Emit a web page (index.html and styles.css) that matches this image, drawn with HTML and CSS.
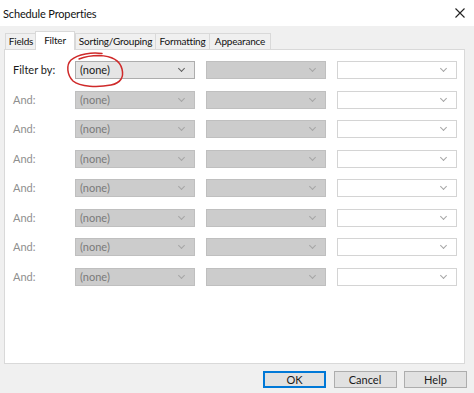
FILE: index.html
```html
<!DOCTYPE html>
<html>
<head>
<meta charset="utf-8">
<link rel="stylesheet" href="styles.css">
</head>
<body>
<div class="dialog">
  <div class="titlebar">
    <span class="title">Schedule Properties</span>
    <svg class="close" width="10" height="10" viewBox="0 0 10 10"><path d="M0.5 0.5 L9.5 9.5 M9.5 0.5 L0.5 9.5" stroke="#222" stroke-width="1.1" fill="none"/></svg>
  </div>
  <div class="tabs">
    <div class="tab tab-fields">Fields</div>
    <div class="tab active tab-filter">Filter</div>
    <div class="tab tab-sorting">Sorting/Grouping</div>
    <div class="tab tab-formatting">Formatting</div>
    <div class="tab tab-appearance">Appearance</div>
  </div>
  <div class="panel">
    <div class="grid">
      <div class="label">Filter by:</div>
      <div class="dd enabled"><span>(none)</span><i class="chev"></i></div>
      <div class="dd disabled"><span></span><i class="chev"></i></div>
      <div class="dd empty"><span></span><i class="chev"></i></div>

      <div class="label dim">And:</div>
      <div class="dd disabled"><span>(none)</span><i class="chev"></i></div>
      <div class="dd disabled"><span></span><i class="chev"></i></div>
      <div class="dd empty"><span></span><i class="chev"></i></div>

      <div class="label dim">And:</div>
      <div class="dd disabled"><span>(none)</span><i class="chev"></i></div>
      <div class="dd disabled"><span></span><i class="chev"></i></div>
      <div class="dd empty"><span></span><i class="chev"></i></div>

      <div class="label dim">And:</div>
      <div class="dd disabled"><span>(none)</span><i class="chev"></i></div>
      <div class="dd disabled"><span></span><i class="chev"></i></div>
      <div class="dd empty"><span></span><i class="chev"></i></div>

      <div class="label dim">And:</div>
      <div class="dd disabled"><span>(none)</span><i class="chev"></i></div>
      <div class="dd disabled"><span></span><i class="chev"></i></div>
      <div class="dd empty"><span></span><i class="chev"></i></div>

      <div class="label dim">And:</div>
      <div class="dd disabled"><span>(none)</span><i class="chev"></i></div>
      <div class="dd disabled"><span></span><i class="chev"></i></div>
      <div class="dd empty"><span></span><i class="chev"></i></div>

      <div class="label dim">And:</div>
      <div class="dd disabled"><span>(none)</span><i class="chev"></i></div>
      <div class="dd disabled"><span></span><i class="chev"></i></div>
      <div class="dd empty"><span></span><i class="chev"></i></div>

      <div class="label dim">And:</div>
      <div class="dd disabled"><span>(none)</span><i class="chev"></i></div>
      <div class="dd disabled"><span></span><i class="chev"></i></div>
      <div class="dd empty"><span></span><i class="chev"></i></div>
    </div>
  </div>
  <div class="footer">
    <button class="btn default">OK</button>
    <button class="btn">Cancel</button>
    <button class="btn">Help</button>
  </div>
  <svg class="markup" width="60" height="38" viewBox="0 0 60 38">
    <path d="M36 2.5 C26 1, 12 3, 5 9 C0 14, 1 24, 7 30 C14 36, 32 36.5, 45 34 C55 32, 58 26, 56 18 C54 10, 46 5, 33 4.5 C25 4.5, 18 6, 13 8" stroke="#cf2a2a" stroke-width="1.5" fill="none" stroke-linecap="round"/>
  </svg>
</div>
</body>
</html>
```

FILE: styles.css
```css
html, body {
  margin: 0;
  padding: 0;
}
body {
  background: #f0f0f0;
  font-family: Lato, "Noto Sans", "Liberation Sans", sans-serif;
  font-size: 11px;
  color: #1a1a1a;
}
.dialog {
  position: relative;
  width: 474px;
  height: 393px;
  display: flex;
  flex-direction: column;
  overflow: hidden;
}
.titlebar {
  height: 26px;
  background: #ffffff;
  display: flex;
  align-items: center;
  justify-content: space-between;
  padding: 0 9px 0 3px;
  box-sizing: border-box;
  flex: none;
}
.title {
  font-size: 11px;
  letter-spacing: -0.15px;
  color: #111;
}
.close {
  display: block;
}
.tabs {
  height: 23px;
  display: flex;
  align-items: flex-end;
  padding-left: 5px;
  flex: none;
  position: relative;
  z-index: 2;
}
.tab {
  height: 16px;
  line-height: 15px;
  padding: 0;
  text-align: center;
  font-size: 10px;
  letter-spacing: -0.2px;
  white-space: nowrap;
  border: 1px solid #d9d9d9;
  border-bottom: none;
  margin-right: -1px;
  background: #f0f0f0;
  color: #111;
  box-sizing: border-box;
}
.tab.active {
  height: 19px;
  margin-bottom: -1px;
  background: #ffffff;
  line-height: 16px;
  margin-left: -1px;
  margin-right: 0;
  position: relative;
}
.tab-fields { width: 32px; }
.tab-filter { width: 40px; }
.tab-sorting { width: 81px; }
.tab-formatting { width: 55px; }
.tab-appearance { width: 62px; }
.panel {
  height: 315px;
  margin: 0 9px 0 4px;
  background: #ffffff;
  border: 1px solid #d9d9d9;
  box-sizing: border-box;
  padding: 11px 0 0 8px;
  flex: none;
}
.grid {
  display: grid;
  grid-template-columns: 51px 120px 120px 120px;
  grid-auto-rows: 18px;
  column-gap: 11px;
  row-gap: 11.5px;
}
.label {
  line-height: 18px;
  color: #1a1a1a;
}
.label.dim {
  color: #8f8f8f;
}
.dd {
  box-sizing: border-box;
  border: 1px solid #bfbfbf;
  display: flex;
  align-items: center;
  justify-content: space-between;
  padding: 0 10px 0 4px;
  line-height: 16px;
}
.dd.enabled {
  background: #e5e5e5;
  border-color: #adadad;
  color: #1a1a1a;
}
.dd.disabled {
  background: #cccccc;
  border-color: #bfbfbf;
  color: #7a7a7a;
}
.dd.empty {
  background: #ffffff;
  border-color: #d4d4d4;
}
.chev {
  display: block;
  width: 4px;
  height: 4px;
  border-right: 1px solid #606060;
  border-bottom: 1px solid #606060;
  transform: rotate(45deg);
  margin-top: -3px;
}
.dd.disabled .chev,
.dd.empty .chev {
  border-color: #a6a6a6;
}
.footer {
  flex: 1;
  display: flex;
  justify-content: flex-end;
  align-items: flex-start;
  padding: 7px 7px 0 0;
  gap: 7.5px;
}
.btn {
  width: 63px;
  height: 17px;
  box-sizing: border-box;
  background: #e1e1e1;
  border: 1px solid #adadad;
  font-family: inherit;
  font-size: 11px;
  color: #1a1a1a;
  padding: 0;
  line-height: 14px;
  margin: 0;
}
.btn.default {
  border: 2px solid #0078d7;
  line-height: 12px;
}
.markup {
  position: absolute;
  left: 66px;
  top: 51px;
}
```
